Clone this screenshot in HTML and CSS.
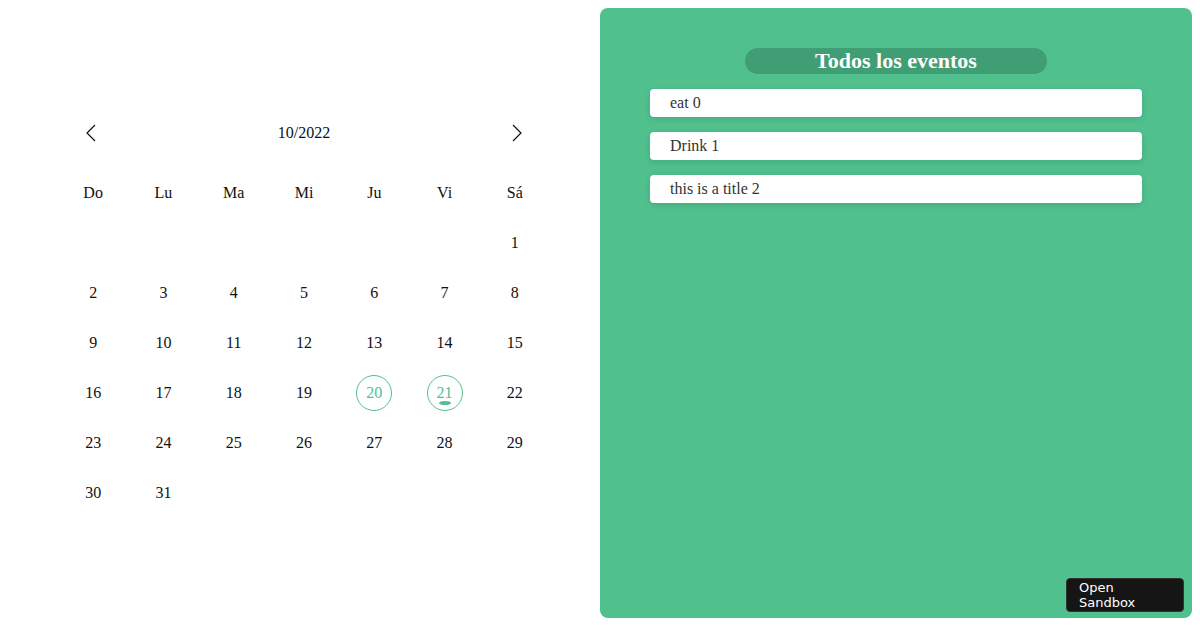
FILE: index.html
```html
<!DOCTYPE html>
<html lang="es">
<head>
<meta charset="utf-8">
<title>Calendario</title>
<link rel="stylesheet" href="styles.css">
</head>
<body>
<div class="app">
  <section class="left">
    <div class="calendar">
      <div class="cal-head">
        <button class="nav" aria-label="Anterior"><svg width="10" height="18" viewBox="0 0 10 18"><polyline points="9,1 1,9 9,17" fill="none" stroke="#111" stroke-width="1.2"/></svg></button>
        <div class="month">10/2022</div>
        <button class="nav" aria-label="Siguiente"><svg width="10" height="18" viewBox="0 0 10 18"><polyline points="1,1 9,9 1,17" fill="none" stroke="#111" stroke-width="1.2"/></svg></button>
      </div>
      <div class="grid weekdays">
        <div class="cell">Do</div><div class="cell">Lu</div><div class="cell">Ma</div><div class="cell">Mi</div><div class="cell">Ju</div><div class="cell">Vi</div><div class="cell">Sá</div>
      </div>
      <div class="grid days">
        <div class="cell"></div><div class="cell"></div><div class="cell"></div><div class="cell"></div><div class="cell"></div><div class="cell"></div><div class="cell"><span class="d">1</span></div>
        <div class="cell"><span class="d">2</span></div><div class="cell"><span class="d">3</span></div><div class="cell"><span class="d">4</span></div><div class="cell"><span class="d">5</span></div><div class="cell"><span class="d">6</span></div><div class="cell"><span class="d">7</span></div><div class="cell"><span class="d">8</span></div>
        <div class="cell"><span class="d">9</span></div><div class="cell"><span class="d">10</span></div><div class="cell"><span class="d">11</span></div><div class="cell"><span class="d">12</span></div><div class="cell"><span class="d">13</span></div><div class="cell"><span class="d">14</span></div><div class="cell"><span class="d">15</span></div>
        <div class="cell"><span class="d">16</span></div><div class="cell"><span class="d">17</span></div><div class="cell"><span class="d">18</span></div><div class="cell"><span class="d">19</span></div><div class="cell"><span class="d active">20</span></div><div class="cell"><span class="d active has-event">21</span></div><div class="cell"><span class="d">22</span></div>
        <div class="cell"><span class="d">23</span></div><div class="cell"><span class="d">24</span></div><div class="cell"><span class="d">25</span></div><div class="cell"><span class="d">26</span></div><div class="cell"><span class="d">27</span></div><div class="cell"><span class="d">28</span></div><div class="cell"><span class="d">29</span></div>
        <div class="cell"><span class="d">30</span></div><div class="cell"><span class="d">31</span></div>
      </div>
    </div>
  </section>
  <section class="right">
    <h2 class="title">Todos los eventos</h2>
    <ul class="events">
      <li class="event">eat 0</li>
      <li class="event">Drink 1</li>
      <li class="event">this is a title 2</li>
    </ul>
  </section>
</div>
<a class="sandbox" href="#">Open<br>Sandbox</a>
</body>
</html>
```

FILE: styles.css
```css
* { box-sizing: border-box; }
html, body { margin: 0; padding: 0; }
body {
  margin: 8px;
  font-family: "Liberation Serif", "Times New Roman", serif;
  font-size: 16px;
  color: #111;
  background: #fff;
}
.app {
  display: flex;
  height: 610px;
}
.left {
  width: 592px;
  display: flex;
  align-items: flex-start;
  justify-content: center;
  padding: 110px 50px 0;
}
.calendar {
  width: 100%;
}
.cal-head {
  display: flex;
  align-items: center;
  justify-content: space-between;
  height: 30px;
  padding: 0 28px 0 28px;
  margin-bottom: 30px;
}
.nav {
  border: 0;
  background: none;
  padding: 0;
  width: 10px;
  height: 18px;
  display: flex;
  cursor: pointer;
}
.month { font-size: 16px; }
.grid {
  display: grid;
  grid-template-columns: repeat(7, 1fr);
}
.cell {
  height: 50px;
  display: flex;
  align-items: center;
  justify-content: center;
}
.weekdays .cell { height: 30px; }
.days { margin-top: 10px; }
.d {
  position: relative;
  width: 36px;
  height: 36px;
  border-radius: 50%;
  display: flex;
  align-items: center;
  justify-content: center;
  border: 1px solid transparent;
}
.d.active {
  border-color: #52c08e;
  color: #52c08e;
}
.d.has-event::after {
  content: "";
  position: absolute;
  left: 50%;
  bottom: 5px;
  width: 12px;
  height: 4px;
  margin-left: -6px;
  border-radius: 50%;
  background: #52c08e;
}
.right {
  width: 592px;
  background: #50c08e;
  border-radius: 8px;
  padding: 40px 50px;
  display: flex;
  flex-direction: column;
  align-items: center;
}
.title {
  margin: 0 0 15px;
  width: 302px;
  height: 26px;
  line-height: 26px;
  border-radius: 13px;
  background: #409e75;
  color: #fff;
  text-align: center;
  font-size: 22px;
  font-weight: bold;
}
.events {
  list-style: none;
  margin: 0;
  padding: 0;
  width: 100%;
  display: flex;
  flex-direction: column;
  gap: 15px;
}
.event {
  height: 28px;
  line-height: 28px;
  background: #fff;
  border-radius: 4px;
  padding: 0 20px;
  color: #333;
  box-shadow: 0 2px 6px rgba(0,0,0,0.12);
}
.sandbox {
  position: fixed;
  right: 16px;
  bottom: 18px;
  width: 118px;
  height: 34px;
  background: #151515;
  border: 1px solid #333;
  border-radius: 4px;
  color: #fff;
  text-decoration: none;
  font-family: "DejaVu Sans", sans-serif;
  font-size: 13px;
  line-height: 15px;
  padding: 1px 0 0 12px;
}
```
